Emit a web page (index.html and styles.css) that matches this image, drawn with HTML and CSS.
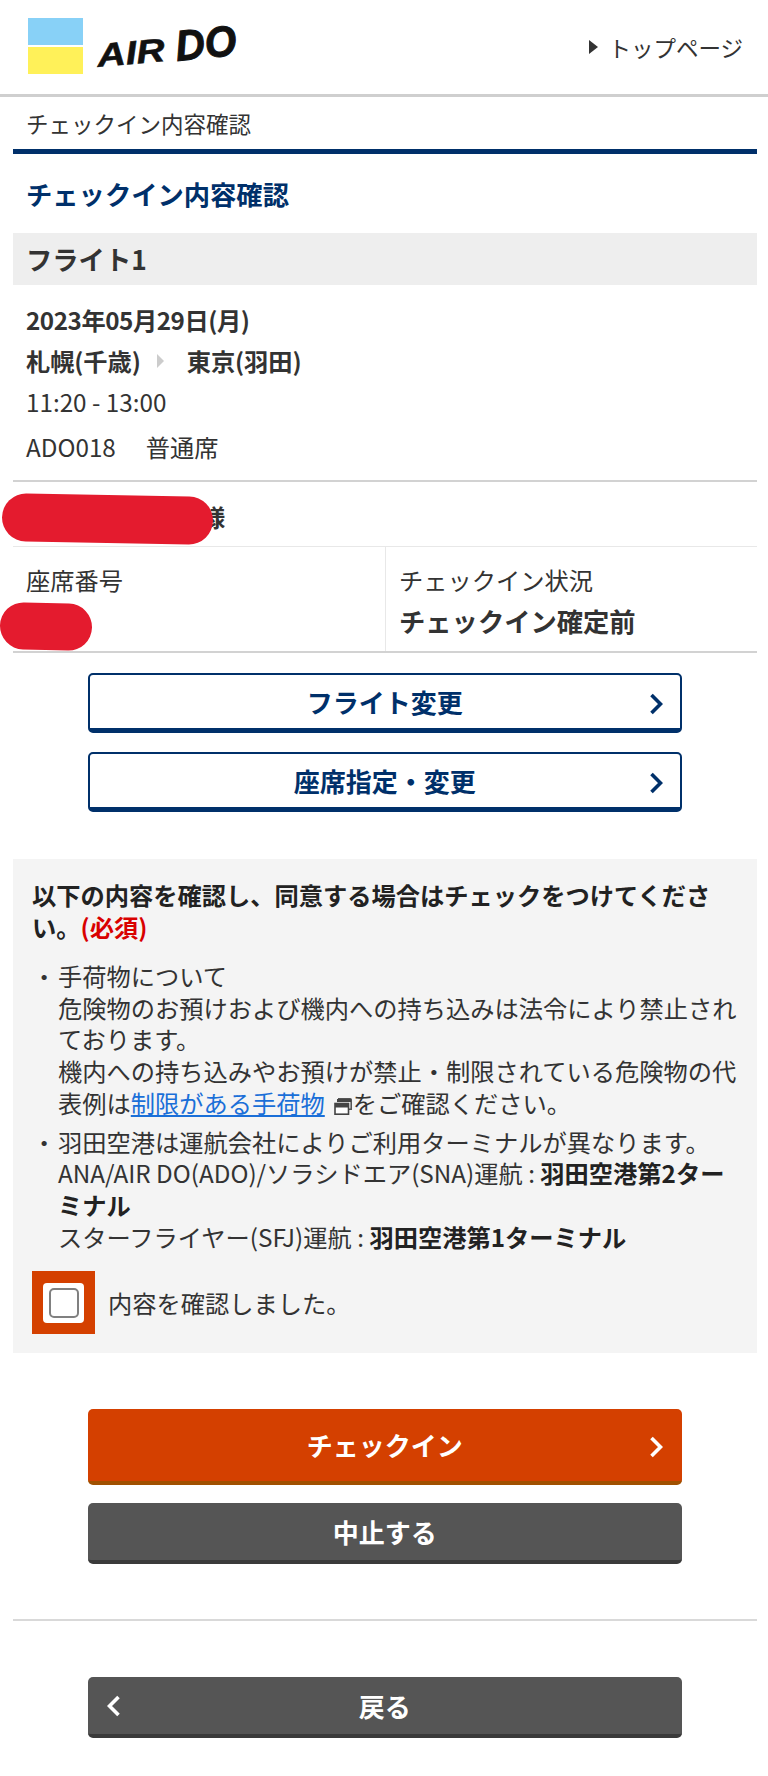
FILE: index.html
```html
<!DOCTYPE html>
<html lang="ja">
<head>
<meta charset="utf-8">
<title>チェックイン内容確認</title>
<link rel="stylesheet" href="styles.css">
</head>
<body>
<div class="page">
  <header class="site-header">
    <svg class="logo" viewBox="0 0 224 60" width="224" height="60" aria-label="AIR DO">
      <rect x="1" y="1" width="55" height="27" fill="#88d1f7"/>
      <rect x="1" y="30" width="55" height="27" fill="#fff159"/>
      <text class="logo-air" x="71" y="50" textLength="68" lengthAdjust="spacingAndGlyphs" transform="rotate(-5 71 50)">AIR</text>
      <text class="logo-do" x="150" y="44" textLength="61" lengthAdjust="spacingAndGlyphs" transform="rotate(-6 150 44)">DO</text>
    </svg>
    <a class="top-link"><span class="top-arrow"></span>トップページ</a>
  </header>

  <div class="crumb">チェックイン内容確認</div>

  <main class="main">
    <div class="rule-navy"></div>
    <h1 class="page-title">チェックイン内容確認</h1>
    <h2 class="flight-bar">フライト1</h2>

    <section class="flight-info">
      <p class="line strong date">2023年05月29日(月)</p>
      <p class="line strong route"><span>札幌(千歳)</span><span class="route-arrow"></span><span>東京(羽田)</span></p>
      <p class="line">11:20 - 13:00</p>
      <p class="line gap-top"><span class="flight-no">ADO018</span>普通席</p>
    </section>

    <div class="passenger">様</div>

    <div class="seat-table">
      <div class="seat-cell">
        <p class="seat-label">座席番号</p>
      </div>
      <div class="seat-cell seat-cell-right">
        <p class="seat-label">チェックイン状況</p>
        <p class="seat-value">チェックイン確定前</p>
      </div>
    </div>

    <div class="btn-stack btn-stack-top">
      <a class="btn btn-outline"><span></span><span class="btn-text">フライト変更</span>
        <svg class="chev" viewBox="0 0 14 22"><path d="M2.5 2 L11.5 11 L2.5 20" /></svg></a>
      <a class="btn btn-outline"><span></span><span class="btn-text">座席指定・変更</span>
        <svg class="chev" viewBox="0 0 14 22"><path d="M2.5 2 L11.5 11 L2.5 20" /></svg></a>
    </div>

    <section class="consent">
      <p class="consent-title">以下の内容を確認し、同意する場合はチェックをつけてください。<span class="required">(必須)</span></p>
      <ul class="notes">
        <li>手荷物について<br>危険物のお預けおよび機内への持ち込みは法令により禁止されております。<br>機内への持ち込みやお預けが禁止・制限されている危険物の代表例は<a class="text-link">制限がある手荷物</a><svg class="win-icon" viewBox="0 0 18 17"><path class="win-back" d="M4 .8h12.2a1 1 0 0 1 1 1v9.4h-2.5"/><path class="win-bar" d="M3 1h14v3H3z"/><rect class="win-front" x="1" y="5.5" width="13.5" height="10.7"/><rect class="win-bar" x="1" y="5.5" width="13.5" height="4"/></svg>をご確認ください。</li>
        <li>羽田空港は運航会社によりご利用ターミナルが異なります。<br>ANA/AIR DO(ADO)/ソラシドエア(SNA)運航 : <b>羽田空港第2ターミナル</b><br>スターフライヤー(SFJ)運航 : <b>羽田空港第1ターミナル</b></li>
      </ul>
      <label class="check-row">
        <span class="check-hl"><span class="check-pad"><span class="check-box"></span></span></span>
        <span>内容を確認しました。</span>
      </label>
    </section>

    <div class="btn-stack btn-stack-action">
      <a class="btn btn-orange"><span></span><span class="btn-text">チェックイン</span>
        <svg class="chev" viewBox="0 0 14 22"><path d="M2.5 2 L11.5 11 L2.5 20" /></svg></a>
      <a class="btn btn-gray"><span></span><span class="btn-text">中止する</span><span></span></a>
    </div>

    <hr class="rule-gray">

    <div class="btn-stack">
      <a class="btn btn-gray"><svg class="chev chev-left" viewBox="0 0 14 22"><path d="M11.5 2 L2.5 11 L11.5 20" /></svg><span class="btn-text">戻る</span><span></span></a>
    </div>
  </main>

  <div class="redact redact-name"></div>
  <div class="redact redact-seat"></div>
</div>
</body>
</html>
```

FILE: styles.css
```css
* { box-sizing: border-box; }
html, body { margin: 0; padding: 0; background: #fff; }
body {
  font-family: "Noto Sans CJK JP", "Noto Sans", sans-serif;
  font-size: 24.25px;
  color: #333;
}
p, h1, h2, ul { margin: 0; padding: 0; }
.page { position: relative; width: 768px; height: 1776px; overflow: hidden; }

.site-header {
  display: flex;
  justify-content: space-between;
  align-items: center;
  height: 97px;
  padding: 0 25px 0 27px;
  border-bottom: 3px solid #cfcfcf;
}
.logo { display: block; }
.logo-air, .logo-do { font-family: "Liberation Sans", sans-serif; font-weight: 700; font-style: italic; fill: #111; stroke: #111; }
.logo-air { font-size: 33px; stroke-width: 0.5; }
.logo-do { font-size: 43px; stroke-width: 1; }

.top-link { display: flex; align-items: center; font-size: 22.5px; line-height: 32px; color: #333; }
.top-arrow {
  width: 0; height: 0;
  margin-right: 10px;
  border-left: 9px solid #333;
  border-top: 7px solid transparent;
  border-bottom: 7px solid transparent;
}

.crumb { height: 52px; padding-left: 26px; font-size: 22.5px; line-height: 52px; color: #333; }

.main { padding: 0 11px 0 13px; }
.rule-navy { height: 5px; background: #00306a; }
.page-title {
  margin: 0;
  padding-left: 13px;
  height: 79px;
  font-size: 26.3px;
  font-weight: 700;
  line-height: 80px;
  color: #00306a;
}
.flight-bar {
  height: 52px;
  padding-left: 13px;
  background: #eee;
  font-size: 26.3px;
  font-weight: 700;
  line-height: 52px;
  color: #333;
}

.flight-info { padding: 14px 0 13px 13px; border-bottom: 2px solid #d2d2d2; }
.line { line-height: 41px; }
.strong { font-weight: 700; }
.date { letter-spacing: -0.45px; }
.gap-top { margin-top: 4px; }
.route { display: flex; align-items: center; letter-spacing: -0.1px; }
.route-arrow {
  width: 0; height: 0;
  margin: 0 23px 0 16px;
  border-left: 7px solid #ccc;
  border-top: 7px solid transparent;
  border-bottom: 7px solid transparent;
}
.flight-no { margin-right: 30px; }

.passenger {
  height: 65px;
  padding-left: 188px;
  font-weight: 700;
  line-height: 70px;
  border-bottom: 1px solid #e8e8e8;
}

.seat-table {
  display: grid;
  grid-template-columns: 372px 1fr;
  height: 106px;
  border-bottom: 2px solid #d2d2d2;
}
.seat-cell { padding: 13px 0 0 13px; }
.seat-cell-right { padding-left: 13px; border-left: 1px solid #e8e8e8; }
.seat-label { line-height: 40px; }
.seat-value { margin-top: 1px; font-size: 26.3px; font-weight: 700; line-height: 40px; }

.btn-stack { display: flex; flex-direction: column; gap: 19px; padding: 0 75px 0 74.5px; }
.btn-stack-top { padding-top: 20px; }
.btn-stack-action { padding-top: 56px; gap: 18px; }

.btn {
  display: grid;
  grid-template-columns: 1fr auto 1fr;
  align-items: center;
  height: 60px;
  border-radius: 5px;
  font-size: 26px;
  font-weight: 700;
  line-height: 34px;
}
.btn-outline { background: #fff; color: #00306a; border: 2px solid #00306a; border-bottom-width: 5px; stroke: #00306a; }
.btn-orange { height: 76px; background: #d44000; color: #fff; border-bottom: 4px solid #a05000; stroke: #fff; }
.btn-gray { height: 61px; background: #555; color: #fff; border-bottom: 4px solid #3a3a3a; stroke: #fff; }
.chev { justify-self: end; width: 14px; height: 22px; margin: 4px 19px 0 0; fill: none; stroke-width: 3.6; stroke-linejoin: miter; }
.chev-left { justify-self: start; margin: 0 0 0 19px; }
.btn-outline .chev { margin-right: 17px; }

.consent {
  margin-top: 47px;
  height: 494px;
  padding: 20px 17px 0 19px;
  background: #f4f4f4;
}
.consent-title { padding-right: 12px; font-weight: 700; line-height: 32px; color: #222; }
.required { color: #d90000; }
.notes { list-style: none; margin-top: 17px; line-height: 31.7px; }
.notes li { position: relative; padding-left: 26px; }
.notes li::before { content: "・"; position: absolute; left: 0; width: 24px; }
.notes li + li { margin-top: 7px; }
.notes b { font-weight: 700; color: #222; }
.text-link { color: #1a6fd8; text-decoration: underline; }
.win-icon { display: inline-block; width: 18px; height: 17px; margin: 0 1px 0 9px; vertical-align: -2px; }
.win-back { fill: none; stroke: #555; stroke-width: 1.6; }
.win-front { fill: #fff; stroke: #444; stroke-width: 1.6; }
.win-bar { fill: #444; }

.check-row { display: flex; align-items: center; gap: 13px; margin-top: 19px; line-height: 34px; }
.check-hl { display: flex; align-items: center; justify-content: center; width: 63px; height: 63px; background: #d44000; }
.check-pad { display: flex; align-items: center; justify-content: center; width: 41px; height: 40px; background: #fff; border-radius: 4px; }
.check-box { width: 30px; height: 30px; background: #fff; border: 2px solid #808080; border-radius: 5px; }

.rule-gray { margin: 55px 0 56px; border: 0; height: 2px; background: #d9d9d9; }

.redact { position: absolute; background: #e41b2e; border-radius: 24px; }
.redact-name { left: 2px; top: 495px; width: 211px; height: 48px; transform: rotate(1deg); }
.redact-seat { left: 0; top: 603px; width: 92px; height: 47px; transform: rotate(1.5deg); }
```
